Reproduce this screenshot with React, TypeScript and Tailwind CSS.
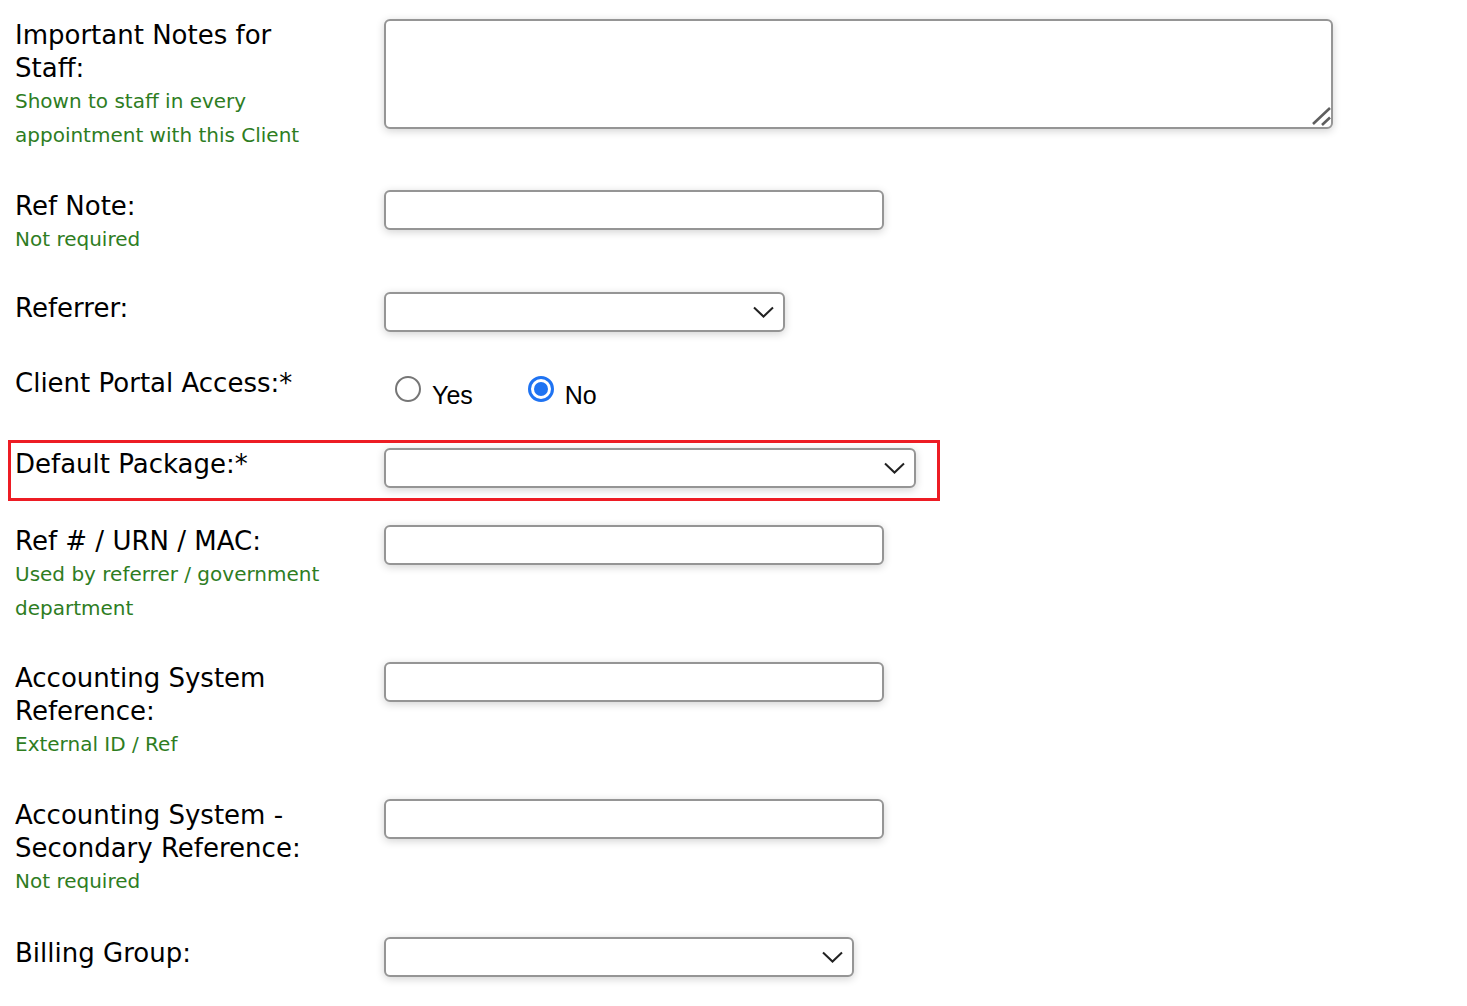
import React from 'react';

const fieldBox =
  'h-[40px] rounded-[6px] border-2 border-[#959595] bg-white shadow-[0_2px_9px_rgba(0,0,0,0.18)] outline-none';

function Label({ lines, hint }: { lines: string[]; hint?: string[] }) {
  return (
    <div className="w-[369px] shrink-0">
      <div className="text-[26px] leading-[33px] text-black">
        {lines.map((l) => (
          <div key={l} className="whitespace-nowrap">
            {l}
          </div>
        ))}
      </div>
      {hint && (
        <div className="-mt-[1px] text-[20px] leading-[34px] text-[#2e7d1f]">
          {hint.map((h) => (
            <div key={h} className="whitespace-nowrap">
              {h}
            </div>
          ))}
        </div>
      )}
    </div>
  );
}

function Chevron() {
  return (
    <svg
      className="pointer-events-none absolute right-[11px] top-1/2 -translate-y-1/2"
      width="21"
      height="12"
      viewBox="0 0 21 12"
      fill="none"
    >
      <path d="M1 1.5 L10.5 10.5 L20 1.5" stroke="#222" strokeWidth="2" />
    </svg>
  );
}

function Select({ width }: { width: string }) {
  return (
    <div className={`relative ${width}`}>
      <select className={`${fieldBox} w-full appearance-none px-2`}>
        <option></option>
      </select>
      <Chevron />
    </div>
  );
}

function Radio({ checked, label }: { checked?: boolean; label: string }) {
  return (
    <label className="flex items-start">
      <span className="mt-[9px] flex h-[26px] w-[26px] items-center justify-center">
        {checked ? (
          <span className="flex h-[26px] w-[26px] items-center justify-center rounded-full border-[3px] border-[#1f73f2] bg-white">
            <span className="h-[14px] w-[14px] rounded-full bg-[#1f73f2]" />
          </span>
        ) : (
          <span className="h-[26px] w-[26px] rounded-full border-2 border-[#767676] bg-white" />
        )}
      </span>
      <span className="ml-[11px] mt-[10px] font-['Liberation_Sans',sans-serif] text-[25px] leading-[36px] text-black">
        {label}
      </span>
    </label>
  );
}

export default function App() {
  return (
    <div className="h-[1006px] overflow-hidden bg-white pt-[19px] font-['DejaVu_Sans',sans-serif]">
      <div className="flex items-start pb-[38px] pl-[15px]">
        <Label
          lines={['Important Notes for', 'Staff:']}
          hint={['Shown to staff in every', 'appointment with this Client']}
        />
        <div className="relative">
          <textarea className="block h-[110px] w-[949px] resize-none rounded-[6px] border-2 border-[#959595] bg-white shadow-[0_2px_9px_rgba(0,0,0,0.18)] outline-none" />
          <svg
            className="pointer-events-none absolute left-0 top-0"
            width="949"
            height="110"
            viewBox="0 0 949 110"
            fill="none"
          >
            <path d="M946 89 L929 105 M946 98.5 L938 106" stroke="#5f5f5f" strokeWidth="2.6" />
          </svg>
        </div>
      </div>

      <div className="flex items-start pb-[36px] pl-[15px]">
        <Label lines={['Ref Note:']} hint={['Not required']} />
        <input className={`${fieldBox} w-[500px]`} />
      </div>

      <div className="flex items-start pb-[35px] pl-[15px]">
        <Label lines={['Referrer:']} />
        <Select width="w-[401px]" />
      </div>

      <div className="flex h-[73px] items-start pl-[15px]">
        <Label lines={['Client Portal Access:*']} />
        <div className="ml-[11px] flex gap-[55px]">
          <Radio label="Yes" />
          <Radio label="No" checked />
        </div>
      </div>

      <div className="mb-[24px] ml-[8px] flex w-[932px] items-start border-[3px] border-[#ed1c24] pb-[10px] pl-[4px] pt-[5px]">
        <Label lines={['Default Package:*']} />
        <Select width="w-[532px]" />
      </div>

      <div className="flex items-start pb-[37px] pl-[15px]">
        <Label
          lines={['Ref # / URN / MAC:']}
          hint={['Used by referrer / government', 'department']}
        />
        <input className={`${fieldBox} w-[500px]`} />
      </div>

      <div className="flex items-start pb-[38px] pl-[15px]">
        <Label lines={['Accounting System', 'Reference:']} hint={['External ID / Ref']} />
        <input className={`${fieldBox} w-[500px]`} />
      </div>

      <div className="flex items-start pb-[39px] pl-[15px]">
        <Label
          lines={['Accounting System -', 'Secondary Reference:']}
          hint={['Not required']}
        />
        <input className={`${fieldBox} w-[500px]`} />
      </div>

      <div className="flex items-start pb-[37px] pl-[15px]">
        <Label lines={['Billing Group:']} />
        <Select width="w-[470px]" />
      </div>

      <div className="flex items-start pl-[15px]">
        <Label lines={['']} />
        <input className={`${fieldBox} w-[500px]`} />
      </div>
    </div>
  );
}
